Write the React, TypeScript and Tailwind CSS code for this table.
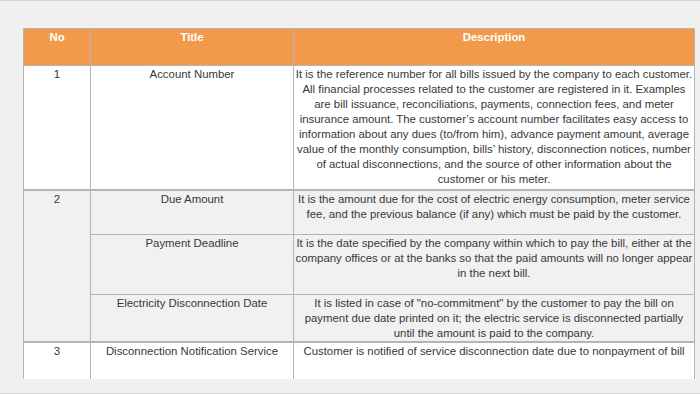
const groups = {
  account: [
    'It is the reference number for all bills issued by the company to each customer.',
    'All financial processes related to the customer are registered in it. Examples',
    'are bill issuance, reconciliations, payments, connection fees, and meter',
    'insurance amount. The customer\u2019s account number facilitates easy access to',
    'information about any dues (to/from him), advance payment amount, average',
    'value of the monthly consumption, bills\u2019 history, disconnection notices, number',
    'of actual disconnections, and the source of other information about the',
    'customer or his meter.',
  ],
  due: [
    'It is the amount due for the cost of electric energy consumption, meter service',
    'fee, and the previous balance (if any) which must be paid by the customer.',
  ],
  deadline: [
    'It is the date specified by the company within which to pay the bill, either at the',
    'company offices or at the banks so that the paid amounts will no longer appear',
    'in the next bill.',
  ],
  disconnection: [
    'It is listed in case of "no-commitment" by the customer to pay the bill on',
    'payment due date printed on it; the electric service is disconnected partially',
    'until the amount is paid to the company.',
  ],
  notify: ['Customer is notified of service disconnection date due to nonpayment of bill'],
};

const cell = 'border border-[#b4b4b4] align-top text-center px-0 pt-px leading-[15px]';

const Lines = ({ lines }: { lines: string[] }) => (
  <>
    {lines.map(l => (
      <span key={l} className="block whitespace-nowrap">{l}</span>
    ))}
  </>
);

export default function App() {
  return (
    <div
      className="w-[700px] h-[394px] bg-[#f0f0f0] border-t border-b border-[#d4d4d4] pt-[27px] pl-[23px] overflow-hidden text-[11.4px] text-[#383838]"
      style={{ fontFamily: '"Liberation Sans", Arial, sans-serif' }}
    >
      <table className="border-collapse table-fixed w-[671px]">
        <colgroup>
          <col className="w-[67px]" />
          <col className="w-[203px]" />
          <col className="w-[401px]" />
        </colgroup>
        <thead>
          <tr className="h-[37px] bg-[#f19a4b] text-white font-bold">
            <th className={cell}>No</th>
            <th className={cell}>Title</th>
            <th className={cell}>Description</th>
          </tr>
        </thead>
        <tbody>
          <tr className="h-[124px] bg-white">
            <td className={cell}>1</td>
            <td className={cell}>Account Number</td>
            <td className={cell}><Lines lines={groups.account} /></td>
          </tr>
          <tr className="h-[45px] bg-[#f1f1f1] border-t-2 border-[#b4b4b4]">
            <td rowSpan={3} className={cell}>2</td>
            <td className={cell}>Due Amount</td>
            <td className={cell}><Lines lines={groups.due} /></td>
          </tr>
          <tr className="h-[60px] bg-[#f1f1f1]">
            <td className={cell}>Payment Deadline</td>
            <td className={cell}><Lines lines={groups.deadline} /></td>
          </tr>
          <tr className="h-[47px] bg-[#f1f1f1]">
            <td className={cell}>Electricity Disconnection Date</td>
            <td className={cell}><Lines lines={groups.disconnection} /></td>
          </tr>
          <tr className="h-[37px] bg-white border-t-2 border-[#b4b4b4]">
            <td className={`${cell} border-b-0`}>3</td>
            <td className={`${cell} border-b-0`}>Disconnection Notification Service</td>
            <td className={`${cell} border-b-0`}><Lines lines={groups.notify} /></td>
          </tr>
        </tbody>
      </table>
    </div>
  );
}
